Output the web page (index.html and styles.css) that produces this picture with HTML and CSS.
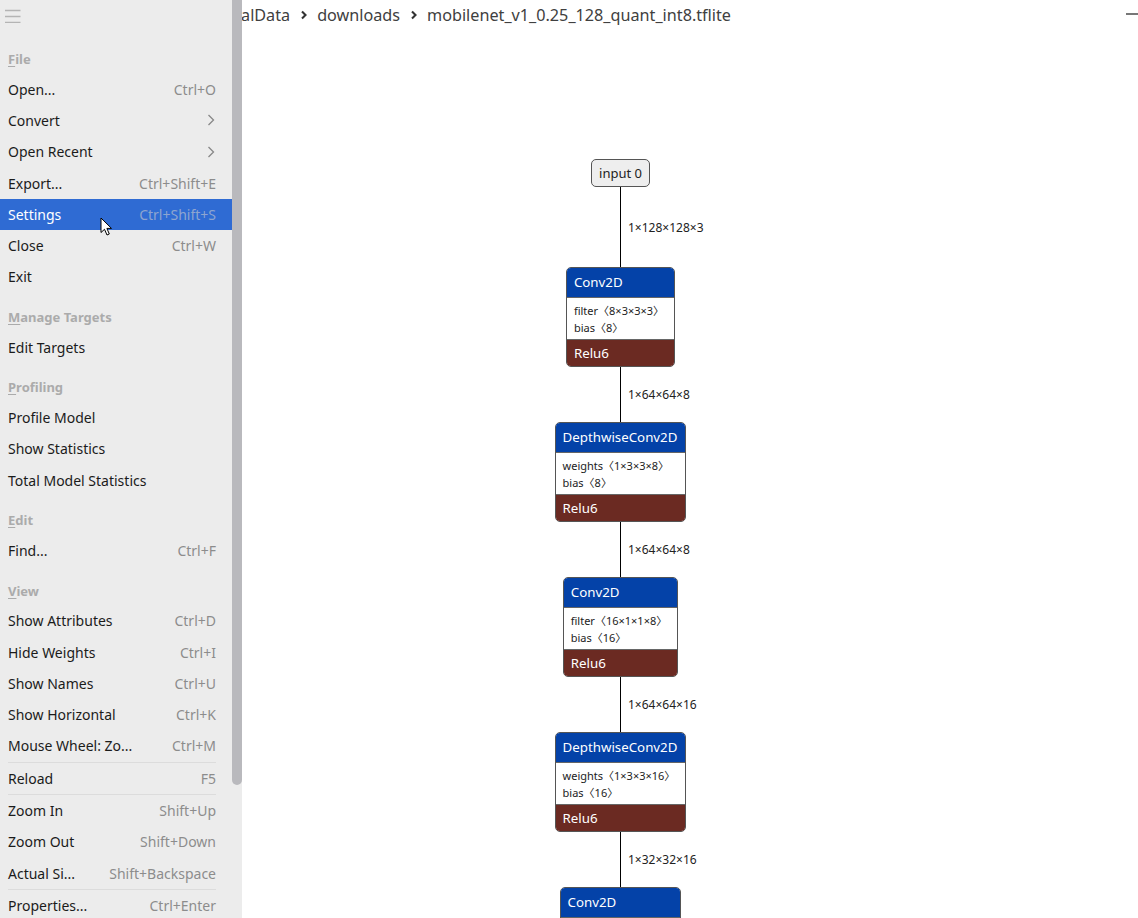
FILE: index.html
```html
<!DOCTYPE html>
<html>
<head>
<meta charset="utf-8">
<link rel="stylesheet" href="styles.css">
</head>
<body>
<div class="app">
  <main class="main">
    <div class="topbar">
      <div class="crumbs">
        <span class="crumb">LocalData</span>
        <span class="sep"><svg width="8" height="10" viewBox="0 0 8 10"><polyline points="2,1.5 5.5,5 2,8.5" fill="none" stroke="#333" stroke-width="2.1"/></svg></span>
        <span class="crumb">downloads</span>
        <span class="sep"><svg width="8" height="10" viewBox="0 0 8 10"><polyline points="2,1.5 5.5,5 2,8.5" fill="none" stroke="#333" stroke-width="2.1"/></svg></span>
        <span class="crumb">mobilenet_v1_0.25_128_quant_int8.tflite</span>
      </div>
      <div class="win-dash"></div>
    </div>
    <div class="graph">
      <div class="input-node">input 0</div>
      <div class="edge edge-first"><span></span><i></i><span class="elabel">1×128×128×3</span></div>
      <div class="node">
        <div class="nhead">Conv2D</div>
        <div class="nbody"><div>filter〈8×3×3×3〉</div><div>bias〈8〉</div></div>
        <div class="nfoot">Relu6</div>
      </div>
      <div class="edge"><span></span><i></i><span class="elabel">1×64×64×8</span></div>
      <div class="node">
        <div class="nhead">DepthwiseConv2D</div>
        <div class="nbody"><div>weights〈1×3×3×8〉</div><div>bias〈8〉</div></div>
        <div class="nfoot">Relu6</div>
      </div>
      <div class="edge"><span></span><i></i><span class="elabel">1×64×64×8</span></div>
      <div class="node">
        <div class="nhead">Conv2D</div>
        <div class="nbody"><div>filter〈16×1×1×8〉</div><div>bias〈16〉</div></div>
        <div class="nfoot">Relu6</div>
      </div>
      <div class="edge"><span></span><i></i><span class="elabel">1×64×64×16</span></div>
      <div class="node">
        <div class="nhead">DepthwiseConv2D</div>
        <div class="nbody"><div>weights〈1×3×3×16〉</div><div>bias〈16〉</div></div>
        <div class="nfoot">Relu6</div>
      </div>
      <div class="edge"><span></span><i></i><span class="elabel">1×32×32×16</span></div>
      <div class="node">
        <div class="nhead">Conv2D</div>
        <div class="nbody"><div>filter〈32×1×1×16〉</div><div>bias〈32〉</div></div>
        <div class="nfoot">Relu6</div>
      </div>
    </div>
  </main>

  <aside class="menu">
    <div class="menu-list">
      <div class="burger"><svg width="16" height="14" viewBox="0 0 16 14"><path d="M0 1.5H15.5M0 7.5H15.5M0 13.5H15.5" stroke="#b4b4b4" stroke-width="1.4"/></svg></div>
      <div class="mhead"><u>F</u>ile</div>
      <div class="mi"><span>Open...</span><span class="sc">Ctrl+O</span></div>
      <div class="mi"><span>Convert</span><span class="chev"><svg width="8" height="12" viewBox="0 0 8 12"><polyline points="1.5,1 6.5,6 1.5,11" fill="none" stroke="#888" stroke-width="1.3"/></svg></span></div>
      <div class="mi"><span>Open Recent</span><span class="chev"><svg width="8" height="12" viewBox="0 0 8 12"><polyline points="1.5,1 6.5,6 1.5,11" fill="none" stroke="#888" stroke-width="1.3"/></svg></span></div>
      <div class="mi"><span>Export...</span><span class="sc">Ctrl+Shift+E</span></div>
      <div class="mi active"><span>Settings</span><span class="sc">Ctrl+Shift+S</span></div>
      <div class="mi"><span>Close</span><span class="sc">Ctrl+W</span></div>
      <div class="mi"><span>Exit</span></div>
      <div class="mhead"><u>M</u>anage Targets</div>
      <div class="mi"><span>Edit Targets</span></div>
      <div class="mhead"><u>P</u>rofiling</div>
      <div class="mi"><span>Profile Model</span></div>
      <div class="mi"><span>Show Statistics</span></div>
      <div class="mi"><span>Total Model Statistics</span></div>
      <div class="mhead"><u>E</u>dit</div>
      <div class="mi"><span>Find...</span><span class="sc">Ctrl+F</span></div>
      <div class="mhead"><u>V</u>iew</div>
      <div class="mi"><span>Show Attributes</span><span class="sc">Ctrl+D</span></div>
      <div class="mi"><span>Hide Weights</span><span class="sc">Ctrl+I</span></div>
      <div class="mi"><span>Show Names</span><span class="sc">Ctrl+U</span></div>
      <div class="mi"><span>Show Horizontal</span><span class="sc">Ctrl+K</span></div>
      <div class="mi"><span>Mouse Wheel: Zo...</span><span class="sc">Ctrl+M</span></div>
      <div class="msep"></div>
      <div class="mi"><span>Reload</span><span class="sc">F5</span></div>
      <div class="msep"></div>
      <div class="mi"><span>Zoom In</span><span class="sc">Shift+Up</span></div>
      <div class="mi"><span>Zoom Out</span><span class="sc">Shift+Down</span></div>
      <div class="mi"><span>Actual Si...</span><span class="sc">Shift+Backspace</span></div>
      <div class="msep"></div>
      <div class="mi"><span>Properties...</span><span class="sc">Ctrl+Enter</span></div>
    </div>
    <div class="scrolltrack"><div class="thumb"></div></div>
    <svg class="cursor" width="13" height="20" viewBox="0 0 13 20"><path d="M1 1 L1 15.5 L4.5 12.3 L7 18 L9.3 17 L6.9 11.4 L11.5 11.4 Z" fill="#fff" stroke="#000" stroke-width="1" stroke-linejoin="round"/></svg>
  </aside>
</div>
</body>
</html>
```
FILE: styles.css
```css
* { box-sizing: border-box; }
html, body {
  margin: 0;
  padding: 0;
  width: 1138px;
  height: 918px;
  overflow: hidden;
  background: #fff;
}
body {
  font-family: "Noto Sans", "Open Sans", "Noto Sans CJK SC", sans-serif;
  color: #1b1b1b;
}
.app {
  position: relative;
  width: 1138px;
  height: 918px;
  overflow: hidden;
}
.main {
  width: 1138px;
  height: 918px;
  display: flex;
  flex-direction: column;
}
.topbar {
  height: 30px;
  display: flex;
  align-items: center;
  justify-content: space-between;
}
.crumbs {
  display: flex;
  align-items: center;
  margin-left: 215px;
  font-size: 16.2px;
  color: #404040;
  gap: 7px;
  line-height: 30px;
}
.sep { display: flex; align-items: center; padding: 0 2.5px; }
.win-dash {
  width: 12px;
  height: 2px;
  background: #777;
  margin-top: -2px;
}
.graph {
  margin-left: 500px;
  margin-top: 129px;
  width: 241px;
  display: flex;
  flex-direction: column;
  align-items: center;
}
.input-node {
  height: 28px;
  padding: 0 7px;
  border: 1px solid #555;
  border-radius: 5px;
  background: #eeeeee;
  font-size: 13px;
  line-height: 26px;
  color: #222;
}
.edge {
  width: 241px;
  height: 55px;
  display: grid;
  grid-template-columns: 120px 1px 120px;
  align-items: center;
}
.edge-first { height: 80px; }
.edge i {
  display: block;
  height: 100%;
  background: #000;
}
.elabel {
  padding-left: 7px;
  font-size: 12px;
  color: #222;
  white-space: nowrap;
}
.node {
  border: 1px solid #555;
  border-radius: 5px;
  overflow: hidden;
  background: #fff;
}
.nhead {
  height: 29px;
  background: #0442a8;
  color: #fff;
  font-size: 13.3px;
  line-height: 29px;
  padding: 0 8px 0 7px;
}
.nbody {
  height: 42px;
  border-top: 1px solid #666;
  padding: 4px 10px 0 7px;
  font-size: 11px;
  line-height: 17px;
  color: #222;
  white-space: nowrap;
}
.nfoot {
  height: 27px;
  border-top: 1px solid #666;
  background: #6b2a22;
  color: #fff;
  font-size: 13.3px;
  line-height: 26px;
  padding: 0 7px;
}
.menu {
  position: absolute;
  left: 0;
  top: 0;
  width: 242px;
  height: 918px;
  display: flex;
  background: #ececec;
}
.menu-list {
  width: 232px;
  padding: 0 16px 0 0;
  font-size: 14px;
}
.burger {
  height: 35px;
  padding: 9px 0 0 5px;
}
.burger svg { display: block; }
.mhead {
  padding: 14px 0 4px 8px;
  line-height: 21px;
  font-size: 13px;
  font-weight: bold;
  color: #ababab;
}
.mhead u { text-decoration-thickness: 1px; text-underline-offset: 2px; }
.mi {
  height: 31.3px;
  display: flex;
  align-items: center;
  justify-content: space-between;
  padding-left: 8px;
  padding-bottom: 1px;
  white-space: nowrap;
  color: #1b1b1b;
}
.mi .sc { color: #8c8c8c; }
.mi .chev { display: flex; margin-right: 1px; }
.mi.active {
  background: #2f6bd3;
  color: #fff;
  margin-right: -16px;
  padding-right: 16px;
}
.mi.active .sc { color: #8ea5cf; }
.msep {
  height: 1px;
  margin: 0 0 0 8px;
  background: #dcdcdc;
}
.scrolltrack {
  width: 10px;
  height: 918px;
  background: #ececec;
}
.thumb {
  width: 10px;
  height: 785px;
  background: #b9b9bd;
  border-radius: 0 0 5px 5px;
}
.cursor {
  position: absolute;
  left: 100px;
  top: 217px;
}
```
